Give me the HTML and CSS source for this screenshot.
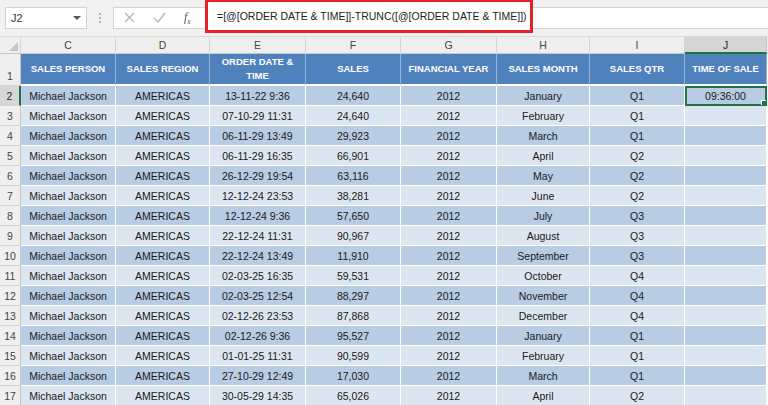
FILE: index.html
```html
<!DOCTYPE html>
<html lang="en">

<head>
    <meta charset="UTF-8">
    <meta name="viewport" content="width=device-width, initial-scale=1.0">
    <title>Time of Sale</title>
    <link rel="stylesheet" href="styles.css">
</head>

<body>
    <div class="formula-bar">
        <div class="name-box">
            <span>J2</span>
            <svg width="8" height="5" viewBox="0 0 8 5"><path d="M0 0 L8 0 L4 4 Z" fill="#555"/></svg>
        </div>
        <div class="grip">
            <i></i><i></i><i></i>
        </div>
        <div class="formula-input">
            <div class="fx-buttons">
                <svg width="11" height="11" viewBox="0 0 11 11"><path d="M1 1 L10 10 M10 1 L1 10" stroke="#b5b5b5" stroke-width="1.3"/></svg>
                <svg width="13" height="11" viewBox="0 0 13 11"><path d="M1 6 L5 10 L12 1" stroke="#b5b5b5" stroke-width="1.3" fill="none"/></svg>
                <span class="fx">f<sub>x</sub></span>
            </div>
            <div class="formula-text">=[@[ORDER DATE &amp; TIME]]-TRUNC([@[ORDER DATE &amp; TIME]])</div>
        </div>
    </div>

    <table class="sheet">
        <colgroup>
            <col style="width:21px">
            <col style="width:95px">
            <col style="width:94px">
            <col style="width:96px">
            <col style="width:95px">
            <col style="width:96px">
            <col style="width:93px">
            <col style="width:95px">
            <col style="width:82px">
            <col style="width:10px">
        </colgroup>
        <tr class="col-heads">
            <th class="corner"><span class="corner-mark"></span></th>
            <th>C</th><th>D</th><th>E</th><th>F</th><th>G</th><th>H</th><th>I</th>
            <th class="active-col">J</th>
            <th></th>
        </tr>
        <tr class="table-head">
            <td class="row-num bottom">1</td>
            <td>SALES PERSON</td>
            <td>SALES REGION</td>
            <td>ORDER DATE &amp;<br>TIME</td>
            <td>SALES</td>
            <td>FINANCIAL YEAR</td>
            <td>SALES MONTH</td>
            <td>SALES QTR</td>
            <td>TIME OF SALE</td>
            <td class="blank"></td>
        </tr>
    </table>

    <script>
        // rows of the sales table
        var rows = [
            ["13-11-22 9:36", "24,640", "January", "Q1", "09:36:00"],
            ["07-10-29 11:31", "24,640", "February", "Q1", ""],
            ["06-11-29 13:49", "29,923", "March", "Q1", ""],
            ["06-11-29 16:35", "66,901", "April", "Q2", ""],
            ["26-12-29 19:54", "63,116", "May", "Q2", ""],
            ["12-12-24 23:53", "38,281", "June", "Q2", ""],
            ["12-12-24 9:36", "57,650", "July", "Q3", ""],
            ["22-12-24 11:31", "90,967", "August", "Q3", ""],
            ["22-12-24 13:49", "11,910", "September", "Q3", ""],
            ["02-03-25 16:35", "59,531", "October", "Q4", ""],
            ["02-03-25 12:54", "88,297", "November", "Q4", ""],
            ["02-12-26 23:53", "87,868", "December", "Q4", ""],
            ["02-12-26 9:36", "95,527", "January", "Q1", ""],
            ["01-01-25 11:31", "90,599", "February", "Q1", ""],
            ["27-10-29 12:49", "17,030", "March", "Q1", ""],
            ["30-05-29 14:35", "65,026", "April", "Q2", ""]
        ];

        var table = document.querySelector(".sheet");
        rows.forEach(function(r, i) {
            var n = i + 2;
            var tr = document.createElement("tr");
            tr.className = n % 2 == 0 ? "band-dark" : "band-light";
            tr.innerHTML =
                '<td class="row-num' + (n == 2 ? ' active-row' : '') + '">' + n + '</td>' +
                '<td>Michael Jackson</td>' +
                '<td>AMERICAS</td>' +
                '<td>' + r[0] + '</td>' +
                '<td>' + r[1] + '</td>' +
                '<td>2012</td>' +
                '<td>' + r[2] + '</td>' +
                '<td>' + r[3] + '</td>' +
                '<td' + (n == 2 ? ' class="selected"' : '') + '>' + r[4] + '</td>' +
                '<td class="blank"></td>';
            table.appendChild(tr);
        });

        var last = document.createElement("tr");
        last.className = "band-dark";
        last.innerHTML = '<td class="row-num"></td>' + '<td></td>'.repeat(8) + '<td class="blank"></td>';
        table.appendChild(last);
    </script>
</body>

</html>
```

FILE: styles.css
```css
body {
    margin: 0;
    width: 768px;
    height: 405px;
    overflow: hidden;
    background-color: #ffffff;
    font-family: "Liberation Sans", Arial, sans-serif;
}

/* formula bar */
.formula-bar {
    display: flex;
    align-items: center;
    height: 37px;
    padding-left: 5px;
    background-color: #f1f1f1;
    box-sizing: border-box;
    border-bottom: 1px solid #d9d9d9;
}

.name-box {
    width: 82px;
    height: 22px;
    background-color: white;
    border: 1px solid #d4d4d4;
    box-sizing: border-box;
    display: flex;
    align-items: center;
    justify-content: space-between;
    padding: 0 5px 0 5px;
    font-size: 11px;
    color: #333;
}

.grip {
    width: 26px;
    display: flex;
    flex-direction: column;
    align-items: center;
    gap: 2px;
}

.grip i {
    width: 2px;
    height: 2px;
    background-color: #b0b0b0;
}

.formula-input {
    flex: 1;
    height: 22px;
    display: flex;
    align-items: center;
    background-color: white;
    border: 1px solid #d4d4d4;
    border-right: none;
    box-sizing: border-box;
}

.fx-buttons {
    width: 92px;
    display: flex;
    align-items: center;
    gap: 18px;
    padding-left: 10px;
    box-sizing: border-box;
}

.fx {
    font-family: "Liberation Serif", serif;
    font-style: italic;
    font-size: 12px;
    color: #555;
}

.fx sub {
    font-size: 8px;
}

.formula-text {
    margin-left: -1px;
    width: 328px;
    height: 34px;
    margin-top: -4px;
    padding: 0 0 0 9px;
    display: flex;
    align-items: center;
    border: 3px solid #e4202b;
    box-sizing: border-box;
    font-size: 10.5px;
    color: #222;
    background-color: white;
    white-space: nowrap;
}

/* grid */
.sheet {
    border-collapse: separate;
    border-spacing: 0;
    table-layout: fixed;
    width: 777px;
    font-size: 10.5px;
    color: #1a1a1a;
}

.sheet td,
.sheet th {
    padding: 0;
    text-align: center;
    white-space: nowrap;
    overflow: hidden;
}

.col-heads th {
    height: 15px;
    font-weight: normal;
    font-size: 10.5px;
    color: #444;
    background-color: #efefef;
    border-right: 1px solid #d4d4d4;
    border-bottom: 1px solid #c6c6c6;
}

.col-heads .active-col {
    background-color: #d6d6d6;
    color: #1f1f1f;
    border-bottom: 2px solid #217346;
    border-right: 1px solid #c6c6c6;
}

.corner {
    position: relative;
}

.corner-mark {
    position: absolute;
    right: 2px;
    bottom: 2px;
    width: 0;
    height: 0;
    border-left: 9px solid transparent;
    border-bottom: 9px solid #c6c6c6;
}

.row-num {
    background-color: #efefef;
    color: #444;
    border-right: 1px solid #c6c6c6;
    border-bottom: 1px solid #d4d4d4;
    vertical-align: middle;
}

.row-num.bottom {
    vertical-align: bottom;
    padding-bottom: 2px;
}

.table-head td {
    height: 29px;
    line-height: 14px;
    background-color: #4f81bd;
    color: white;
    font-weight: bold;
    font-size: 9.5px;
    border-right: 1px solid #95b3d7;
    border-bottom: 2px solid white;
}

.table-head td.row-num {
    background-color: #efefef;
    color: #444;
    font-weight: normal;
    font-size: 10.5px;
    border-right: 1px solid #c6c6c6;
    border-bottom: 1px solid #d4d4d4;
}

.band-dark td,
.band-light td {
    height: 19px;
    border-right: 1px solid white;
    border-bottom: 1px solid white;
}

.band-dark td {
    background-color: #b8cce4;
}

.band-light td {
    background-color: #dce6f1;
}

.sheet td.row-num {
    background-color: #efefef;
    border-right: 1px solid #c6c6c6;
    border-bottom: 1px solid #d4d4d4;
}

.sheet td.row-num.active-row {
    background-color: #d6d6d6;
    color: #1f1f1f;
    border-right: 2px solid #217346;
}

.sheet td.blank,
.table-head td.blank {
    background-color: white;
    border-right: none;
    border-bottom: 1px solid #e1e1e1;
}

.sheet td.selected {
    position: relative;
    outline: 2px solid #217346;
    outline-offset: -2px;
}

.sheet td.selected::after {
    content: "";
    position: absolute;
    right: -2px;
    bottom: -2px;
    width: 5px;
    height: 5px;
    background-color: #217346;
    border: 1px solid white;
}
```
